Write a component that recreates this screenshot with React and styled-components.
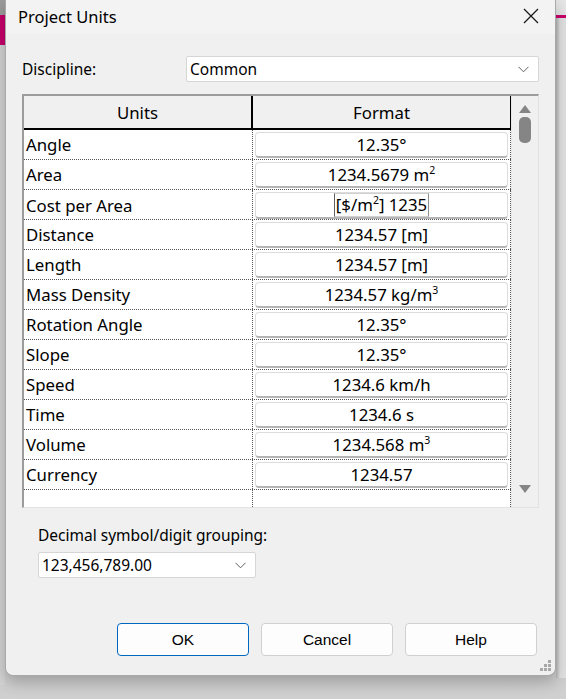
import React from 'react';
import styled, { createGlobalStyle } from 'styled-components';

const GlobalStyle = createGlobalStyle`
  html, body {
    margin: 0;
    padding: 0;
  }
  body {
    font-family: 'Noto Sans', 'Open Sans', sans-serif;
    color: #000;
  }
`;

const rows = [
  { unit: 'Angle', format: '12.35°' },
  { unit: 'Area', format: <>1234.5679 m<sup>2</sup></> },
  { unit: 'Cost per Area', format: <>[$/m<sup>2</sup>] 1235</>, focused: true },
  { unit: 'Distance', format: '1234.57 [m]' },
  { unit: 'Length', format: '1234.57 [m]' },
  { unit: 'Mass Density', format: <>1234.57 kg/m<sup>3</sup></> },
  { unit: 'Rotation Angle', format: '12.35°' },
  { unit: 'Slope', format: '12.35°' },
  { unit: 'Speed', format: '1234.6 km/h' },
  { unit: 'Time', format: '1234.6 s' },
  { unit: 'Volume', format: <>1234.568 m<sup>3</sup></> },
  { unit: 'Currency', format: '1234.57' },
];

const Screen = styled.div`
  width: 566px;
  height: 699px;
  overflow: hidden;
  display: flex;
  background:
    linear-gradient(#9c9c9c, #9c9c9c) 0 0 / 5px 15px no-repeat,
    linear-gradient(#c8006c, #c8006c) 0 15px / 5px 30px no-repeat,
    linear-gradient(#d4d4d4, #d4d4d4) 0 45px / 5px 640px no-repeat,
    linear-gradient(#e6e6e6, #e6e6e6) 556px 0 / 10px 15px no-repeat,
    linear-gradient(#c8006c, #c8006c) 556px 15px / 10px 3px no-repeat,
    linear-gradient(90deg, #b8b8b8, #e2e2e2 4px) 556px 18px / 10px 660px no-repeat,
    linear-gradient(#bdbdbd, #d0d0d0);
`;

const Dialog = styled.div`
  margin-left: 5px;
  width: 551px;
  height: 676px;
  box-sizing: border-box;
  background: #f0f0f0;
  border: 1px solid #a8a8a8;
  border-top: none;
  border-radius: 0 0 8px 8px;
  box-shadow: 0 6px 16px rgba(0, 0, 0, 0.25);
  display: flex;
  flex-direction: column;
  position: relative;
`;

const TitleBar = styled.div`
  height: 34px;
  display: flex;
  align-items: center;
  justify-content: space-between;
  padding: 0 14px 0 12px;
  background: #f3f3f3;
`;

const Title = styled.div`
  font-size: 16.5px;
  margin-top: -2px;
`;

const CloseButton = styled.div`
  width: 20px;
  height: 20px;
  display: flex;
  align-items: center;
  justify-content: center;
  margin-top: -2px;
`;

const Body = styled.div`
  flex: 1;
  display: flex;
  flex-direction: column;
  padding: 22px 16px 0 16px;
`;

const FieldRow = styled.div`
  display: flex;
  align-items: center;
  height: 26px;
`;

const Label = styled.div`
  font-size: 15.5px;
  width: ${p => (p.$auto ? 'auto' : '164px')};
`;

const Select = styled.div`
  box-sizing: border-box;
  height: 26px;
  width: ${p => p.$width}px;
  background: #fff;
  border: 1px solid #d6d6d6;
  border-radius: 2px;
  display: flex;
  align-items: center;
  justify-content: space-between;
  padding: 0 9px 0 3px;
  font-size: 15.5px;
`;

const Grid = styled.div`
  margin-top: 12px;
  width: 517px;
  height: 414px;
  box-sizing: border-box;
  border-top: 2px solid #9c9c9c;
  border-left: 2px solid #9c9c9c;
  border-right: 1px solid #e2e2e2;
  border-bottom: 1px solid #e2e2e2;
  display: flex;
  overflow: hidden;
`;

const GridMain = styled.div`
  width: 487px;
  background: #fff;
  display: flex;
  flex-direction: column;
`;

const HeaderRow = styled.div`
  display: grid;
  grid-template-columns: 229px 258px;
  height: 34px;
  flex-shrink: 0;
  box-sizing: border-box;
  background: #f0f0f0;
  border-bottom: 2px solid #000;
`;

const HeaderCell = styled.div`
  display: flex;
  align-items: center;
  justify-content: center;
  font-size: 16.8px;
  border-right: ${p => (p.$last ? '1px solid #000' : '2px solid #000')};
`;

const Row = styled.div`
  display: grid;
  grid-template-columns: 229px 258px;
  height: 30px;
  box-sizing: border-box;
  border-bottom: 1px dotted #555;
  flex-shrink: 0;
`;

const UnitCell = styled.div`
  display: flex;
  align-items: center;
  padding-left: 2px;
  font-size: 16.8px;
  border-right: 1px dotted #555;
`;

const FormatCell = styled.div`
  padding: 2px 2px 1px 2px;
  display: flex;
  border-right: 1px dotted #555;
`;

const FormatBox = styled.div`
  flex: 1;
  box-sizing: border-box;
  border: 1px solid #dcdcdc;
  border-bottom: 2px solid #b4b4b4;
  border-radius: 4px;
  display: flex;
  align-items: center;
  justify-content: center;
  font-size: 16.8px;
`;

const FormatText = styled.span`
  line-height: 22px;
  padding: 0 1px;
  ${p =>
    p.$focused &&
    `
    border: 1px solid #d0d0d0;
    border-left: 1px solid #606060;
    border-right: 1px solid #909090;
  `}
  sup {
    font-size: 10.5px;
    line-height: 0;
    vertical-align: 7px;
  }
`;

const Scrollbar = styled.div`
  flex: 1;
  background: #f0f0f0;
  border-left: 1px solid #e8e8e8;
  display: flex;
  flex-direction: column;
  align-items: center;
  padding-top: 9px;
`;

const Thumb = styled.div`
  width: 12px;
  height: 26px;
  border-radius: 5px;
  background: #858585;
  margin-top: 4px;
`;

const ArrowDown = styled.div`
  margin-top: auto;
  margin-bottom: 9px;
`;

const GroupBlock = styled.div`
  margin-top: 16px;
  padding-left: 16px;
  display: flex;
  flex-direction: column;
  gap: 6px;
`;

const Buttons = styled.div`
  margin-top: 45px;
  display: flex;
  justify-content: flex-end;
  gap: 12px;
  padding-right: 2px;
`;

const Button = styled.div`
  width: 132px;
  height: 33px;
  box-sizing: border-box;
  background: #fdfdfd;
  border: 1px solid ${p => (p.$primary ? '#0067c0' : '#d0d0d0')};
  border-radius: 4px;
  display: flex;
  align-items: center;
  justify-content: center;
  font-family: 'Liberation Sans', Arial, sans-serif;
  font-size: 15.5px;
`;

const Grip = styled.svg`
  position: absolute;
  right: 3px;
  bottom: 3px;
`;

const Chevron = () => (
  <svg width="11" height="7" viewBox="0 0 11 7">
    <path d="M0.5 0.8 L5.5 5.8 L10.5 0.8" fill="none" stroke="#606060" strokeWidth="1" />
  </svg>
);

export default function App() {
  return (
    <Screen>
      <GlobalStyle />
      <Dialog>
        <TitleBar>
          <Title>Project Units</Title>
          <CloseButton>
            <svg width="16" height="16" viewBox="0 0 16 16">
              <path d="M1 1 L15 15 M15 1 L1 15" stroke="#1a1a1a" strokeWidth="1.3" />
            </svg>
          </CloseButton>
        </TitleBar>
        <Body>
          <FieldRow>
            <Label>Discipline:</Label>
            <Select $width={353}>
              <span>Common</span>
              <Chevron />
            </Select>
          </FieldRow>

          <Grid>
            <GridMain>
              <HeaderRow>
                <HeaderCell>Units</HeaderCell>
                <HeaderCell $last>Format</HeaderCell>
              </HeaderRow>
              {rows.map(r => (
                <Row key={r.unit}>
                  <UnitCell>{r.unit}</UnitCell>
                  <FormatCell>
                    <FormatBox>
                      <FormatText $focused={r.focused}>{r.format}</FormatText>
                    </FormatBox>
                  </FormatCell>
                </Row>
              ))}
              <Row>
                <UnitCell />
                <FormatCell />
              </Row>
            </GridMain>
            <Scrollbar>
              <svg width="12" height="8" viewBox="0 0 12 8">
                <path d="M6 0 L12 8 L0 8 Z" fill="#858585" />
              </svg>
              <Thumb />
              <ArrowDown>
                <svg width="12" height="8" viewBox="0 0 12 8">
                  <path d="M0 0 L12 0 L6 8 Z" fill="#858585" />
                </svg>
              </ArrowDown>
            </Scrollbar>
          </Grid>

          <GroupBlock>
            <Label $auto>Decimal symbol/digit grouping:</Label>
            <Select $width={218}>
              <span>123,456,789.00</span>
              <Chevron />
            </Select>
          </GroupBlock>

          <Buttons>
            <Button $primary>OK</Button>
            <Button>Cancel</Button>
            <Button>Help</Button>
          </Buttons>
        </Body>
        <Grip width="12" height="12" viewBox="0 0 12 12">
          <g fill="#a8a8a8">
            <rect x="8" y="0" width="3" height="3" />
            <rect x="4" y="4" width="3" height="3" />
            <rect x="8" y="4" width="3" height="3" />
            <rect x="0" y="8" width="3" height="3" />
            <rect x="4" y="8" width="3" height="3" />
            <rect x="8" y="8" width="3" height="3" />
          </g>
        </Grip>
      </Dialog>
    </Screen>
  );
}
